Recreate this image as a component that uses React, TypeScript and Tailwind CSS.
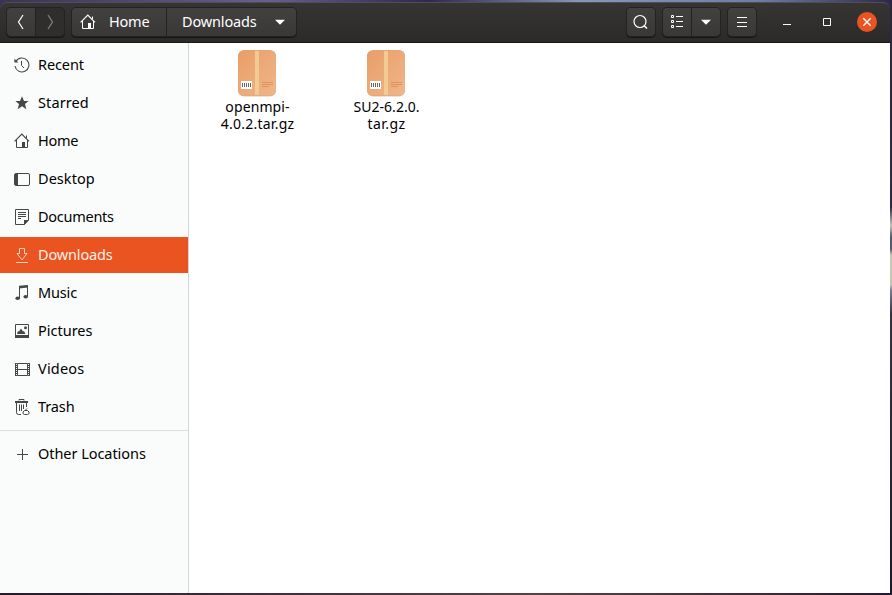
import React from 'react';

type IconProps = { children: React.ReactNode; className?: string };

function Icon({ children, className = '' }: IconProps) {
  return (
    <svg
      width="16"
      height="16"
      viewBox="0 0 16 16"
      fill="none"
      stroke="currentColor"
      className={`block shrink-0 ${className}`}
    >
      {children}
    </svg>
  );
}

const HomeIcon = () => (
  <Icon>
    <path d="M0.6 8.4L7.8 1.1L15 8.4" strokeWidth="1.2" />
    <path d="M2.5 7V14.5H13.5V7M12.5 2.5V5" />
    <path d="M8 9h3v5.5H8z" fill="currentColor" stroke="none" />
  </Icon>
);

const RecentIcon = () => (
  <Icon>
    <path d="M2 4.2A7 7 0 1 1 1 9" strokeWidth="1.1" />
    <path d="M0.4 1.8V5.6H4.4Z" fill="currentColor" stroke="none" />
    <path d="M7.5 4V8.5L10 11" />
  </Icon>
);

const StarIcon = () => (
  <Icon>
    <path
      d="M8 1.3L10 6H14.6L11 9.1L12.3 14.2L8 11.3L3.7 14.2L5 9.1L1.4 6H6Z"
      fill="currentColor"
      stroke="none"
    />
  </Icon>
);

const DesktopIcon = () => (
  <Icon>
    <rect x="0.5" y="2.5" width="15" height="12" rx="1.5" />
    <path d="M1 3H4V14H1Z" fill="currentColor" stroke="none" />
  </Icon>
);

const DocumentsIcon = () => (
  <Icon>
    <path d="M1.5 0.5H14.5V11L10.5 15.5H1.5Z" />
    <path d="M4 3.5H12M4 5.5H12M4 7.5H12M4 9.5H7" />
    <path d="M10 11H15L10 16Z" fill="currentColor" stroke="none" />
  </Icon>
);

const DownloadsIcon = () => (
  <Icon>
    <path d="M5.5 1.5H10.5V6.5H13L8 13L3 6.5H5.5Z" />
    <path d="M2 15.5H14" />
  </Icon>
);

const MusicIcon = () => (
  <Icon>
    <path d="M5.5 13V2L13.5 1V11.5" />
    <path d="M5 0.8L14 0V2.6L5 3.5Z" fill="currentColor" stroke="none" />
    <ellipse cx="3.7" cy="13.3" rx="2.3" ry="1.8" fill="currentColor" stroke="none" />
    <ellipse cx="11.7" cy="11.8" rx="2.3" ry="1.8" fill="currentColor" stroke="none" />
  </Icon>
);

const PicturesIcon = () => (
  <Icon>
    <path d="M1.5 1.5H14.5V14.5H1.5Z" />
    <path d="M1 12H15V15H1Z" fill="currentColor" stroke="none" />
    <path d="M3 11L4 8L5 8.5L7 5.5L9 8.5L10 8L11.5 11Z" fill="currentColor" stroke="none" />
    <circle cx="11.5" cy="4.7" r="1.5" fill="currentColor" stroke="none" />
  </Icon>
);

const VideosIcon = () => (
  <Icon>
    <path d="M3.5 2.5H13.5V14.5H3.5ZM3.5 8.5H13.5" />
    <path d="M2 2V15M15 2V15" strokeWidth="2" strokeDasharray="1 1" />
    <path d="M1.5 2V15M15.5 2V15" />
  </Icon>
);

const TrashIcon = () => (
  <Icon>
    <path d="M5 1.5V0.5H10V1.5" />
    <path d="M1 2H14V4H1Z" fill="currentColor" stroke="none" />
    <path d="M2.5 4V13.5Q2.5 15.5 4.5 15.5H7M12.5 4V8" />
    <path d="M5.5 5.5V12M7.5 5.5V12M9.5 5.5V10" />
    <path d="M10.5 11.5H13.5L15 13Q15.7 15 13.5 15.5H10.5Q8.3 15 9 13Z" />
    <path d="M11 11.5L13 9.5" />
  </Icon>
);

const PlusIcon = () => (
  <Icon>
    <path d="M8.5 3V14M3 8.5H14" />
  </Icon>
);

const CaretDown = () => (
  <svg width="10" height="6" viewBox="0 0 10 6" className="block shrink-0">
    <path d="M0 0.8H10L5 5.8Z" fill="#fff" />
  </svg>
);

const places = [
  { label: 'Recent', icon: RecentIcon, tracking: 'tracking-[-0.1px]' },
  { label: 'Starred', icon: StarIcon, tracking: 'tracking-[0.1px]' },
  { label: 'Home', icon: HomeIcon, tracking: 'tracking-[-0.25px]' },
  { label: 'Desktop', icon: DesktopIcon, tracking: 'tracking-[0.05px]' },
  { label: 'Documents', icon: DocumentsIcon, tracking: 'tracking-[-0.27px]' },
  { label: 'Downloads', icon: DownloadsIcon, tracking: 'tracking-[-0.15px]', active: true },
  { label: 'Music', icon: MusicIcon, tracking: 'tracking-[-0.15px]' },
  { label: 'Pictures', icon: PicturesIcon, tracking: 'tracking-[0px]' },
  { label: 'Videos', icon: VideosIcon, tracking: 'tracking-[0.2px]' },
  { label: 'Trash', icon: TrashIcon, tracking: 'tracking-[-0.1px]' },
];

const files = [
  {
    id: 'openmpi',
    lines: [
      { text: 'openmpi-', tracking: 'tracking-[0.1px]' },
      { text: '4.0.2.tar.gz', tracking: 'tracking-[0.25px]' },
    ],
  },
  {
    id: 'su2',
    lines: [
      { text: 'SU2-6.2.0.', tracking: 'tracking-[0.05px]' },
      { text: 'tar.gz', tracking: 'tracking-[0.4px]' },
    ],
  },
];

function ArchiveIcon({ id }: { id: string }) {
  return (
    <svg width="38" height="47" viewBox="0 0 38 47" className="mr-0.5 block">
      <defs>
        <linearGradient id={id} x1="0" y1="0" x2="1" y2="1">
          <stop offset="0" stopColor="#e99e67" />
          <stop offset="1" stopColor="#efb68a" />
        </linearGradient>
      </defs>
      <rect y="1" width="38" height="45.5" rx="6" fill="#d5c6bd" />
      <rect width="38" height="46" rx="6" fill="#e6a377" />
      <rect y="0.8" width="38" height="44.7" rx="5.5" fill={`url(#${id})`} />
      <path d="M17 1H21V45H17Z" fill="#f2ca94" />
      <path d="M3 31H14V39H3Z" fill="#fff" />
      <path d="M4.5 33V37M6.5 33V37M8.5 33V37M10.5 33V37M12.5 33V37" stroke="#666" />
      <path d="M24 32.5H35M24 34.5H35M24 36.5H31" stroke="#df935f" />
    </svg>
  );
}

function Sidebar() {
  return (
    <nav className="w-[189px] shrink-0 border-r border-[#d3d5d4] bg-[#fafcfb] pt-1 text-black">
      <ul className="flex flex-col gap-0.5">
        {places.map(({ label, icon: PlaceIcon, active, tracking }) => (
          <li
            key={label}
            className={`flex h-9 items-center gap-2 pl-3.5 ${active ? 'bg-[#e95420] text-[#fff0e9]' : ''}`}
          >
            <span className={active ? 'text-[#fbd0bf]' : 'text-[#464646]'}>
              <PlaceIcon />
            </span>
            <span className={`pb-0.5 ${tracking}`}>{label}</span>
          </li>
        ))}
      </ul>
      <div className="mt-[5px] h-px bg-[#dcdedd]" />
      <div className="mt-[5px] flex h-9 items-center gap-2 pl-3.5">
        <span className="text-[#464646]">
          <PlusIcon />
        </span>
        <span className="pb-0.5 tracking-[-0.05px]">Other Locations</span>
      </div>
    </nav>
  );
}

const button = 'flex h-7 items-center bg-linear-to-b from-[#434140] to-[#3a3837]';
const frame = 'flex overflow-hidden rounded-[4px] shadow-[0_0_0_1px_#252322,0_1px_0_1px_#171616]';

function HeaderBar() {
  return (
    <header className="flex h-[41px] shrink-0 items-center rounded-t-[7px] border-t border-b border-t-[#514f4d] border-b-[#1b1718] bg-linear-to-b from-[#373533] to-[#2c2a29] pr-[13px] pb-px pl-[7px] text-white">
      <div className={frame}>
        <button className={`${button} w-7 justify-center`}>
          <Icon>
            <path d="M10 1L5.5 8L10 15" strokeWidth="1.2" />
          </Icon>
        </button>
        <button className="flex h-7 w-[29px] items-center justify-center border-l border-[#222] bg-[#302e2d] text-[#868482]">
          <Icon>
            <path d="M6 1L10.5 8L6 15" strokeWidth="1.2" />
          </Icon>
        </button>
      </div>

      <div className={`${frame} ml-2`}>
        <button className={`${button} w-[94px] gap-[13px] pl-2`}>
          <HomeIcon />
          <span className="pb-0.5 tracking-[-0.2px]">Home</span>
        </button>
        <button className={`${button} w-[130px] justify-between border-l border-[#252322] pr-[11px] pl-[15px]`}>
          <span className="pb-0.5 tracking-[-0.15px]">Downloads</span>
          <CaretDown />
        </button>
      </div>

      <div className="ml-auto flex gap-2">
        <div className={frame}>
          <button className={`${button} w-7 justify-center`}>
            <Icon>
              <circle cx="7" cy="7.5" r="6" strokeWidth="1.2" />
              <path d="M11 11.5L14 14.5" strokeWidth="1.5" />
            </Icon>
          </button>
        </div>
        <div className={frame}>
          <button className={`${button} w-7 justify-center`}>
            <Icon>
              <path d="M2.5 1.5H4.5V3.5H2.5ZM2.5 6.5H4.5V8.5H2.5ZM2.5 11.5H4.5V13.5H2.5Z" />
              <path d="M7 2.5H14M7 7.5H14M7 12.5H14" />
            </Icon>
          </button>
          <button className={`${button} w-[29px] justify-center border-l border-[#252322]`}>
            <CaretDown />
          </button>
        </div>
        <div className={frame}>
          <button className={`${button} w-7 justify-center`}>
            <Icon>
              <path d="M3 3.5H13M3 8.5H13M3 12.5H13" />
            </Icon>
          </button>
        </div>
      </div>

      <div className="ml-[23px] flex items-center gap-6">
        <button>
          <Icon>
            <path d="M4 10.5H12" />
          </Icon>
        </button>
        <button>
          <Icon>
            <path d="M4.5 4.5H11.5V11.5H4.5Z" />
          </Icon>
        </button>
        <button className="-ml-0.5 flex size-5 items-center justify-center rounded-full bg-[#e95420]">
          <Icon>
            <path d="M4.3 4.3L11.7 11.7M11.7 4.3L4.3 11.7" strokeWidth="1.4" />
          </Icon>
        </button>
      </div>
    </header>
  );
}

export default function App() {
  return (
    <div className="h-[595px] w-[892px] overflow-hidden bg-[linear-gradient(90deg,#393355,#665f91_30%,#302853_48%,#8796bb_65%,#6d7da8_85%,#302749)] font-['Noto_Sans','Open_Sans',sans-serif] text-[14.5px] leading-5">
      <div className="flex h-full bg-[linear-gradient(90deg,#241d29,#594147_60%,#3c2932_88%,#211b2e)] bg-[length:100%_2px] bg-bottom bg-no-repeat">
        <div className="flex h-[593px] w-[890px] flex-col pt-0.5">
          <HeaderBar />
          <div className="flex min-h-0 flex-1">
            <Sidebar />
            <main className="flex flex-1 items-start bg-white pt-[7px] pl-1">
              {files.map((file) => (
                <div key={file.id} className="flex w-[129px] flex-col items-center">
                  <ArchiveIcon id={file.id} />
                  <div className="mt-px text-center text-[14px] leading-[17px] text-black">
                    {file.lines.map((line) => (
                      <p key={line.text} className={line.tracking}>
                        {line.text}
                      </p>
                    ))}
                  </div>
                </div>
              ))}
            </main>
          </div>
        </div>
        <div className="h-[593px] w-0.5 bg-[linear-gradient(180deg,#2b2442,#31294d_35%,#c1c3b6_38%,#555675_40%,#555675_42%,#c5c8ac_43%,#c5c8ac_48%,#77769a_49%,#363147_53%,#1c1830)]" />
      </div>
    </div>
  );
}
